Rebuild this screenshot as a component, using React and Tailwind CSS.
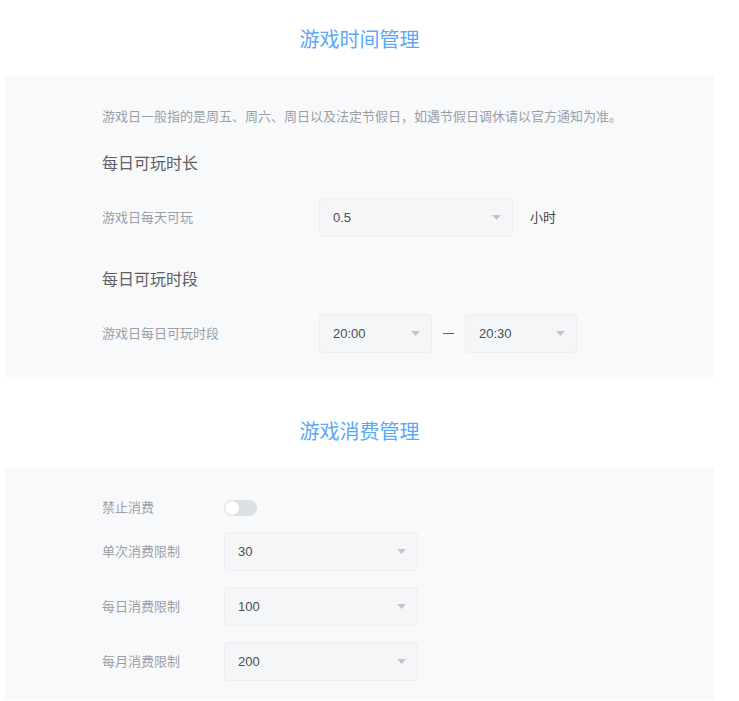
const FONT = { fontFamily: '"Liberation Sans", "Noto Sans CJK SC", sans-serif' }

function Caret() {
  return (
    <svg width="9" height="5" viewBox="0 0 9 5" className="shrink-0">
      <path d="M0 0 L9 0 L4.5 5 Z" fill="#c0c4cc" />
    </svg>
  )
}

function Select({ value, className = '' }) {
  return (
    <div
      className={`h-[39px] flex items-center justify-between pl-[13px] pr-[11px]
                  bg-[#f5f6f8] border border-[#eceef1] rounded-[4px] ${className}`}
    >
      <span className="text-[13px] text-[#4a4d52]">{value}</span>
      <Caret />
    </div>
  )
}

function Title({ children, className = '' }) {
  return (
    <h2 className={`ml-[5px] w-[709px] text-center text-[20px] leading-[28px] text-[#5ba8f7] ${className}`}>
      {children}
    </h2>
  )
}

function Label({ children, w }) {
  return (
    <span className={`text-[13px] text-[#9a9fa6] shrink-0 ${w}`}>{children}</span>
  )
}

const LIMITS = [
  { label: '单次消费限制', value: '30' },
  { label: '每日消费限制', value: '100' },
  { label: '每月消费限制', value: '200' },
]

export default function App() {
  return (
    <div className="w-[739px] h-[701px] overflow-hidden bg-white" style={FONT}>
      {/* ── 游戏时间管理 ── */}
      <Title className="pt-[26px] pb-[22px]">游戏时间管理</Title>
      <section className="ml-[5px] w-[709px] bg-[#f8f9fb] pl-[97px] pt-[31px] pb-[24px]">
        <p className="text-[13px] leading-[20px] text-[#9aa0a8]">
          游戏日一般指的是周五、周六、周日以及法定节假日，如遇节假日调休请以官方通知为准。
        </p>

        <h3 className="mt-[25px] text-[16px] leading-[24px] text-[#5c6066]">每日可玩时长</h3>
        <div className="mt-[22px] flex items-center">
          <Label w="w-[217px]">游戏日每天可玩</Label>
          <Select value="0.5" className="w-[194px]" />
          <span className="ml-[17px] text-[13px] text-[#444]">小时</span>
        </div>

        <h3 className="mt-[31px] text-[16px] leading-[24px] text-[#5c6066]">每日可玩时段</h3>
        <div className="mt-[22px] flex items-center">
          <Label w="w-[217px]">游戏日每日可玩时段</Label>
          <Select value="20:00" className="w-[113px]" />
          <div className="mx-[11px] w-[11px] h-px bg-[#666]" />
          <Select value="20:30" className="w-[112px]" />
        </div>
      </section>

      {/* ── 游戏消费管理 ── */}
      <Title className="pt-[41px] pb-[21px]">游戏消费管理</Title>
      <section className="ml-[5px] w-[709px] bg-[#f8f9fb] pl-[97px] pt-[33px] pb-[19px]">
        <div className="flex items-center h-[16px]">
          <Label w="w-[122px]">禁止消费</Label>
          <div className="w-[33px] h-[16px] rounded-full bg-[#dcdfe6] p-px">
            <div className="w-[14px] h-[14px] rounded-full bg-white" />
          </div>
        </div>
        <div className="flex flex-col gap-[16px] mt-[16px]">
          {LIMITS.map(({ label, value }) => (
            <div key={label} className="flex items-center">
              <Label w="w-[122px]">{label}</Label>
              <Select value={value} className="w-[194px]" />
            </div>
          ))}
        </div>
      </section>
    </div>
  )
}
